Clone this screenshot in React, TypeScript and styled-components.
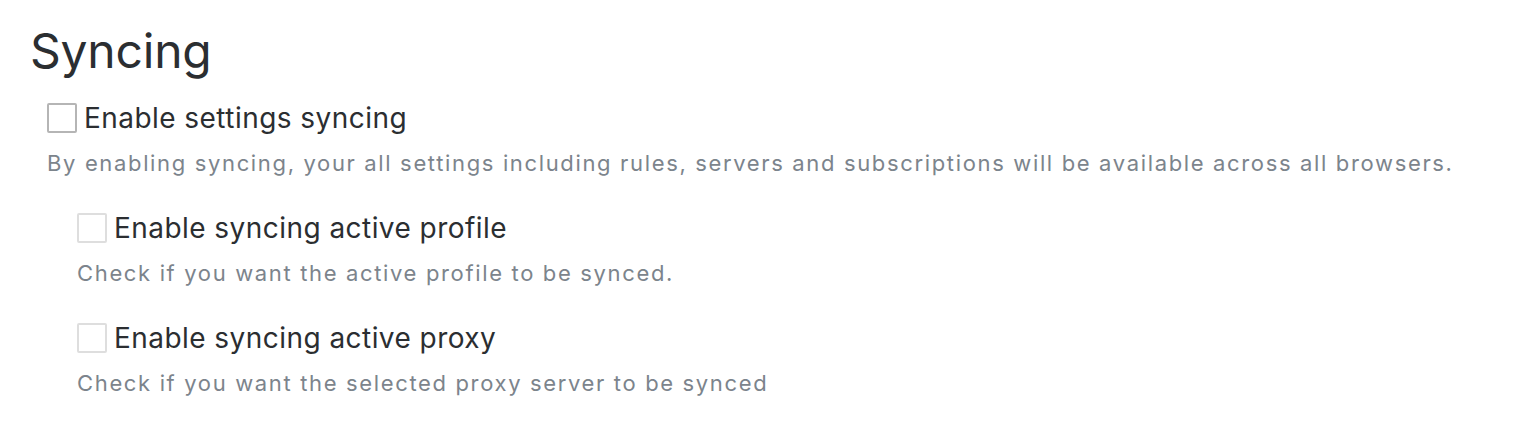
import React from "react";
import styled, { createGlobalStyle } from "styled-components";

const GlobalStyle = createGlobalStyle`
  html, body {
    margin: 0;
    padding: 0;
    background: #ffffff;
  }
  body {
    font-family: Inter, "Noto Sans", "Liberation Sans", sans-serif;
    color: #2b2e31;
  }
`;

interface OptionProps {
  label: string;
  description: string;
  disabled?: boolean;
  nested?: boolean;
}

const Option = ({ label, description, disabled, nested }: OptionProps) => {
  return (
    <OptionWraper nested={nested}>
      <LabelRow>
        <Box type="checkbox" disabled={disabled} />
        <LabelText>{label}</LabelText>
      </LabelRow>
      <Description>{description}</Description>
    </OptionWraper>
  );
};

const App = () => {
  return (
    <>
      <GlobalStyle />
      <Page>
        <Title>Syncing</Title>
        <Option
          label="Enable settings syncing"
          description="By enabling syncing, your all settings including rules, servers and subscriptions will be available across all browsers."
        />
        <Option
          nested
          disabled
          label="Enable syncing active profile"
          description="Check if you want the active profile to be synced."
        />
        <Option
          nested
          disabled
          label="Enable syncing active proxy"
          description="Check if you want the selected proxy server to be synced"
        />
      </Page>
    </>
  );
};

const Page = styled.div`
  padding: 20px 30px 0 30px;
  display: flex;
  flex-direction: column;
`;

const Title = styled.h1`
  margin: 0 0 18px 0;
  font-size: 48px;
  font-weight: 400;
  line-height: 62px;
  color: #2b2e31;
  letter-spacing: -0.2px;
`;

interface OptionWraperProps {
  nested?: boolean;
}
const OptionWraper = styled.div<OptionWraperProps>`
  display: flex;
  flex-direction: column;
  padding-left: ${(props) => (props.nested ? 47 : 17)}px;
  margin-bottom: 32px;
`;

const LabelRow = styled.label`
  display: flex;
  align-items: center;
  gap: 7px;
  height: 36px;
`;

const Box = styled.input`
  appearance: none;
  margin: 0;
  width: 30px;
  height: 30px;
  box-sizing: border-box;
  border: 2px solid #b5b5b5;
  border-radius: 2px;
  background: #ffffff;
  &:disabled {
    border-color: #dedede;
  }
`;

const LabelText = styled.span`
  font-size: 28px;
  line-height: 36px;
  letter-spacing: 0.45px;
  color: #2b2e31;
`;

const Description = styled.div`
  margin-top: 12px;
  font-size: 22px;
  line-height: 30px;
  letter-spacing: 1.65px;
  color: #7c848c;
`;

export default App;
